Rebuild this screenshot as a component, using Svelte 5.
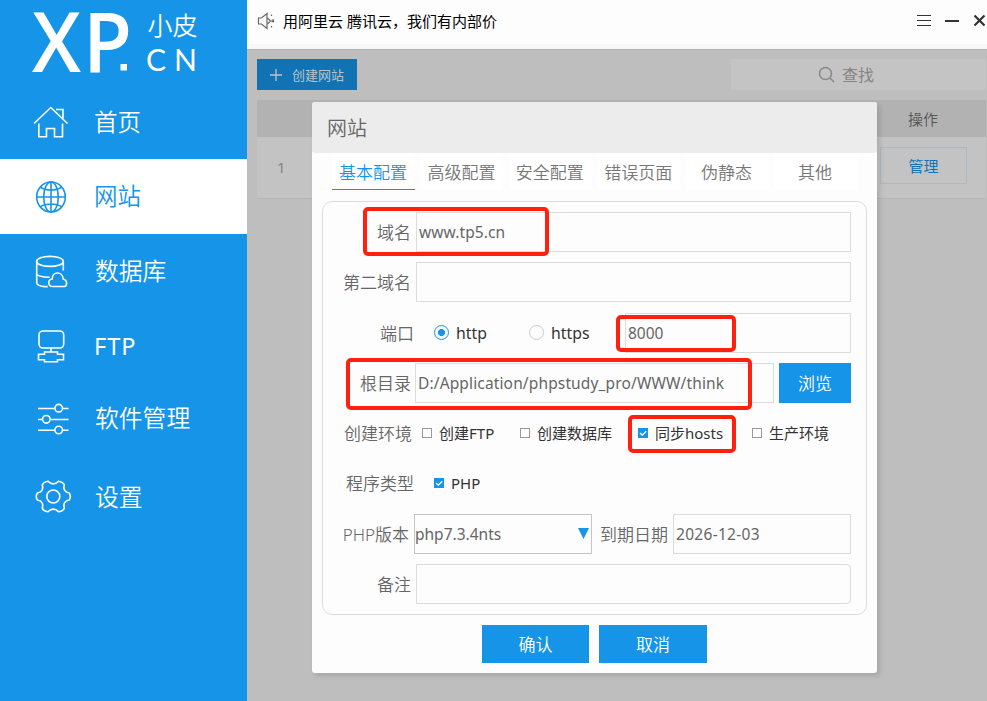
<script>
  let active = 'site';
  let tab = 0;
  let scheme = 'http';

  const menu = [
    { id: 'home', label: '首页' },
    { id: 'site', label: '网站' },
    { id: 'db', label: '数据库' },
    { id: 'ftp', label: 'FTP' },
    { id: 'soft', label: '软件管理' },
    { id: 'setting', label: '设置' }
  ];

  const tabs = ['基本配置', '高级配置', '安全配置', '错误页面', '伪静态', '其他'];

  const envs = [
    { id: 'e-ftp', label: '创建FTP', on: false },
    { id: 'e-db', label: '创建数据库', on: false },
    { id: 'e-hosts', label: '同步hosts', on: true },
    { id: 'e-prod', label: '生产环境', on: false }
  ];
</script>

{#snippet check(on)}
  <svg class="check" viewBox="0 0 10 10">
    {#if on}
      <rect width="10" height="10" fill="#1694e8" />
      <path d="M2 5l2.3 2.2L8.3 3.2" fill="none" stroke="#fff" stroke-width="1.3" />
    {:else}
      <rect x=".5" y=".5" width="9" height="9" fill="#fff" stroke="#999" />
    {/if}
  </svg>
{/snippet}

<div class="app">
  <aside>
    <svg class="logo" viewBox="0 0 247 84">
      <g fill="#fff">
        <text class="big" x="32" y="72" textLength="49" lengthAdjust="spacingAndGlyphs">X</text>
        <text class="big" x="83" y="72" textLength="49" lengthAdjust="spacingAndGlyphs">P</text>
        <rect x="120.5" y="64" width="6.5" height="6.5" />
        <text class="cn" x="147.5" y="35">小皮</text>
        <text class="en" x="146" y="71">C</text>
        <text class="en" x="174" y="71">N</text>
      </g>
    </svg>
    <nav>
      {#each menu as item}
        <button class="item {item.id}" class:active={active === item.id} on:click={() => (active = item.id)}>
          <svg class="icon" viewBox="0 0 40 40">
            {#if item.id === 'home'}
              <path d="M2 21.5L18.8 5.5L35.5 21.5M24 7.5h7v9M6.8 21.5v13.3h7.7v-8.3h8v8.3h8V21.5" />
            {:else if item.id === 'site'}
              <ellipse cx="19" cy="20" rx="14.3" ry="15" />
              <ellipse cx="19" cy="20" rx="7.3" ry="15" />
              <path d="M19 5v30M4.7 20h28.6M8 10c6 4 16 4 22 0M8 30c6-4 16-4 22 0" />
            {:else if item.id === 'db'}
              <ellipse cx="18" cy="9.4" rx="13.3" ry="5" />
              <path d="M4.7 9.4v21c0 2.3 3.5 4.2 8 4.2h3M31.3 9.4v9M4.7 22.2c1 1.7 6 3 13 3" />
              <path d="M21 34.5c-5.5 0-5.5-7-.8-7.5c0-8 10.5-8 11 0c4.5 1 4.5 7.5 0 7.5z" />
            {:else if item.id === 'ftp'}
              <rect x="7" y="4" width="24.7" height="17" rx="4" />
              <path d="M19 21v4M12.5 25h13v2.3h6v5.5h-6v2h-13v-2h-6v-5.5h6z" />
            {:else if item.id === 'soft'}
              <path d="M6 10.5h16.5M30.5 10.5h6M6 21.5h4M18 21.5h18.5M6 32.3h16.5M30.5 32.3h6" />
              <circle cx="26.7" cy="10.2" r="3.8" />
              <circle cx="14.3" cy="21.3" r="3.8" />
              <circle cx="26.7" cy="32" r="3.8" />
            {:else}
              <circle cx="21.3" cy="20.5" r="6.5" />
              <path d="M16 5.2C19.5 8.8 23.1 8.8 26.6 5.2C29.5 5.8 32 7.5 32.3 9C31 13.5 33 16.2 37.2 17C38.5 19 38.5 22 37.2 24C33 24.8 31 27.5 32.3 32C32 33.5 29.5 35.2 26.6 35.8C23.1 32.2 19.5 32.2 16 35.8C13.1 35.2 10.6 33.5 10.3 32C11.6 27.5 9.6 24.8 5.4 24C4.1 22 4.1 19 5.4 17C9.6 16.2 11.6 13.5 10.3 9C10.6 7.5 13.1 5.8 16 5.2Z" />
            {/if}
          </svg>
          <span>{item.label}</span>
        </button>
      {/each}
    </nav>
  </aside>

  <main>
    <header>
      <svg class="horn" viewBox="0 0 18 18">
        <path d="M1.5 6h3l5.5-4.5v15l-5.5-4.5h-3z" fill="none" stroke="#666" stroke-width="1.2" />
        <path d="M10.5 6l3 3l-3 3M14.5 2.5v1.5M14.5 8.2h2v1.5h-2M14.5 14v1.5" fill="none" stroke="#666" stroke-width="1.2" />
      </svg>
      <span class="notice">用阿里云 腾讯云，我们有内部价</span>
      <svg class="win" viewBox="0 0 70 20">
        <g fill="none" stroke="#333">
          <path d="M0 5.5h14M0 10.5h14M0 15.5h14" />
          <path d="M28 11h14" stroke-width="2" />
          <path d="M57.5 5.5l10 10M67.5 5.5l-10 10" stroke-width="2.2" />
        </g>
      </svg>
    </header>

    <div class="tools">
      <button class="create">
        <svg viewBox="0 0 12 12"><path d="M6 0v12M0 6h12" stroke="#c4c4c4" stroke-width="1.3" /></svg>
        <span>创建网站</span>
      </button>
      <div class="search">
        <svg viewBox="0 0 18 18"><path d="M12 12l4 4M13.5 7.5a6 6 0 1 1-12 0a6 6 0 1 1 12 0z" fill="none" stroke="#898989" stroke-width="1.6" /></svg>
        <span>查找</span>
      </div>
    </div>
    <div class="table">
      <div class="thead"><span>操作</span></div>
      <div class="trow">
        <span class="idx">1</span>
        <button class="manage">管理</button>
      </div>
    </div>
  </main>

  <section class="dialog">
    <h2>网站</h2>
    <div class="tabs">
      {#each tabs as name, i}
        <button class:on={tab === i} on:click={() => (tab = i)}>{name}</button>
      {/each}
    </div>

    <div class="form">
      <div class="row">
        <label for="domain">域名</label>
        <div class="field" id="domain"><span class="t-domain">www.tp5.cn</span></div>
      </div>
      <div class="row">
        <label for="domain2">第二域名</label>
        <div class="field" id="domain2"></div>
      </div>
      <div class="row port">
        <label for="port">端口</label>
        <div class="radios">
          {#each ['http', 'https'] as s}
            <button class="radio" on:click={() => (scheme = s)}>
              <i class:on={scheme === s}></i>{s}
            </button>
          {/each}
        </div>
        <div class="field" id="port">8000</div>
      </div>
      <div class="row root">
        <label for="root">根目录</label>
        <div class="field" id="root"><span class="t-root">D:/Application/phpstudy_pro/WWW/think</span></div>
        <button class="btn browse">浏览</button>
      </div>
      <div class="row env">
        <label for="e-ftp">创建环境</label>
        {#each envs as env}
          <div class="opt {env.id}" id={env.id}>{@render check(env.on)}<span>{env.label}</span></div>
        {/each}
      </div>
      <div class="row type">
        <label for="php">程序类型</label>
        <div class="opt" id="php">{@render check(true)}<span>PHP</span></div>
      </div>
      <div class="row version">
        <label for="ver">PHP版本</label>
        <div class="field select" id="ver">
          <span>php7.3.4nts</span>
          <svg viewBox="0 0 11 11"><path d="M0 0h11L5.5 11z" fill="#1694e8" /></svg>
        </div>
        <label class="due" for="due">到期日期</label>
        <div class="field" id="due"><span class="t-due">2026-12-03</span></div>
      </div>
      <div class="row">
        <label for="note">备注</label>
        <div class="field note" id="note"></div>
      </div>
    </div>

    <div class="actions">
      <button class="btn">确认</button>
      <button class="btn cancel">取消</button>
    </div>
  </section>

  <div class="mark m-domain"></div>
  <div class="mark m-port"></div>
  <div class="mark m-root"></div>
  <div class="mark m-hosts"></div>
</div>

<style>
  :global(body) {
    margin: 0;
    overflow: hidden;
  }

  .app {
    position: relative;
    display: flex;
    width: 987px;
    height: 701px;
    overflow: hidden;
    font-family: 'Noto Sans', 'Noto Sans CJK SC', sans-serif;
    font-size: 15px;
    color: #666;
  }

  .app * {
    box-sizing: border-box;
  }

  button {
    margin: 0;
    padding: 0;
    border: 0;
    background: none;
    font: inherit;
    color: inherit;
    white-space: nowrap;
  }

  svg {
    display: block;
    flex: none;
  }

  aside {
    width: 247px;
    flex: none;
    background: #1694e8;
  }

  .logo {
    width: 247px;
    height: 84px;
    overflow: visible;
  }

  .big {
    font: 600 84px 'Open Sans', sans-serif;
  }

  .cn {
    font: 350 25px 'Noto Sans CJK SC', sans-serif;
  }

  .en {
    font: 400 30px Lato, sans-serif;
  }

  nav {
    display: flex;
    flex-direction: column;
  }

  .item {
    display: flex;
    align-items: center;
    height: 75px;
    padding-left: 32px;
    color: #fff;
    font-size: 23.5px;
    font-weight: 350;
    line-height: 34px;
  }

  .item span {
    margin-left: 22px;
  }

  .item.site span,
  .item.ftp span {
    padding-bottom: 2px;
  }

  .item.db span,
  .item.soft span,
  .item.setting span {
    margin-left: 23px;
    padding-bottom: 1px;
    font-size: 23.8px;
  }

  .item.ftp span {
    letter-spacing: 1px;
    font-weight: 400;
  }

  .item.soft {
    height: 72px;
    padding-bottom: 4px;
  }

  .item.setting {
    height: 80px;
  }

  .item.setting span {
    padding: 1px 0 0;
  }

  .item.active {
    background: #fff;
    color: #1694e8;
  }

  .icon {
    width: 40px;
    height: 40px;
    fill: none;
    stroke: currentColor;
    stroke-width: 1.6;
  }

  main {
    flex: 1;
    min-width: 0;
    background: #bebebe;
  }

  header {
    display: flex;
    align-items: center;
    height: 50px;
    padding: 0 0 7px 10px;
    background: linear-gradient(#fdfdfd 44px, #f8f8f8 44px);
    border-bottom: 1px solid #b0b0b0;
  }

  .horn {
    width: 18px;
    height: 18px;
  }

  .notice {
    margin-left: 8px;
    padding-bottom: 1px;
    color: #000;
    white-space: nowrap;
  }

  .win {
    width: 70px;
    height: 20px;
    margin: 0 0 2px auto;
  }

  .tools {
    display: flex;
    justify-content: space-between;
    padding: 9px 1px 10px 10px;
  }

  .create {
    display: flex;
    align-items: center;
    width: 100px;
    height: 31px;
    padding-left: 13px;
    background: #1173b4;
    color: #b9c3ca;
    font-size: 13px;
  }

  .create svg {
    width: 12px;
    height: 12px;
    margin-right: 10px;
  }

  .search {
    display: flex;
    align-items: center;
    width: 255px;
    height: 31px;
    padding-left: 87px;
    background: #c4c4c4;
    color: #858585;
    font-size: 16px;
  }

  .search span {
    padding-bottom: 2px;
  }

  .search svg {
    width: 18px;
    height: 18px;
    margin-right: 6px;
  }

  .table {
    margin: 0 1px 0 10px;
  }

  .thead {
    display: flex;
    align-items: center;
    justify-content: flex-end;
    height: 37px;
    padding-right: 48px;
    background: #b2b2b2;
    color: #555;
    font-weight: 350;
  }

  .trow {
    display: flex;
    align-items: center;
    justify-content: space-between;
    height: 62px;
    padding: 0 19px 0 20px;
    background: #c3c3c3;
    border-bottom: 1px solid #b5b5b5;
    color: #858585;
  }

  .idx {
    padding-bottom: 1px;
  }

  .manage {
    width: 87px;
    height: 37px;
    margin-bottom: 5px;
    border: 1px solid #aab9c4;
    color: #1173b4;
  }

  .dialog {
    position: absolute;
    left: 312px;
    top: 102px;
    width: 565px;
    height: 571px;
    background: #fdfdfd;
    border-radius: 3px;
    box-shadow: 3px 3px 5px rgba(0, 0, 0, 0.12);
  }

  h2 {
    height: 51px;
    margin: 0;
    padding-left: 15px;
    background: #ececec;
    border-radius: 3px;
    font-size: 20px;
    font-weight: 350;
    line-height: 53px;
  }

  .tabs {
    display: flex;
    gap: 5.4px;
    padding-left: 20px;
  }

  .tabs button {
    width: 83px;
    height: 37px;
    padding-right: 1px;
    background: #fff;
    border-bottom: 1px solid transparent;
    font-size: 17px;
    font-weight: 350;
    color: #777;
  }

  .tabs .on {
    color: #1694e8;
    border-color: #1694e8;
  }

  .form {
    display: flex;
    flex-direction: column;
    justify-content: space-between;
    width: 545px;
    height: 414px;
    margin: 11px 10px 0;
    padding: 10px 15px;
    border: 1px solid #dcdcdc;
    border-radius: 10px;
  }

  .row {
    display: flex;
    align-items: center;
    height: 40px;
  }

  label {
    width: 73px;
    flex: none;
    margin-right: 5px;
    padding-bottom: 1px;
    font-size: 17px;
    font-weight: 350;
    text-align: right;
    white-space: nowrap;
  }

  .field {
    display: flex;
    align-items: center;
    flex: 1;
    height: 40px;
    padding-left: 2px;
    border: 1px solid #dcdcdc;
    font-size: 15.5px;
    white-space: nowrap;
  }

  .t-domain {
    letter-spacing: 0.1px;
  }

  .t-root {
    letter-spacing: 0.14px;
  }

  .t-due {
    letter-spacing: 0.3px;
  }

  .note {
    border-radius: 0 4px 4px 0;
  }

  .port label {
    width: 76px;
    margin-right: 20px;
  }

  .radios {
    display: flex;
    flex: 1;
  }

  .radio {
    display: flex;
    align-items: center;
    width: 95px;
    font-size: 15.8px;
    color: #333;
  }

  .radio i {
    width: 15px;
    height: 15px;
    margin-right: 7px;
    border: 1px solid #ccc;
    border-radius: 50%;
  }

  .radio i.on {
    border-color: #1694e8;
    background: radial-gradient(circle, #1694e8 3.2px, transparent 3.8px);
  }

  .port .field {
    flex: none;
    width: 226px;
  }

  .root label {
    margin-right: 4px;
  }

  .btn {
    width: 107px;
    height: 38px;
    padding-bottom: 1px;
    background: #1694e8;
    color: #fff;
    font-size: 17px;
    font-weight: 350;
  }

  .cancel {
    width: 108px;
  }

  .browse {
    width: 72px;
    height: 40px;
    margin-left: 5px;
  }

  .env label {
    width: 74px;
    margin-right: 10px;
  }

  .opt {
    display: flex;
    align-items: center;
    width: 98px;
    color: #333;
    white-space: nowrap;
  }

  .env .opt span {
    padding-bottom: 2px;
  }

  .check {
    width: 10px;
    height: 10px;
    margin-right: 7px;
  }

  .opt.e-db {
    width: 118px;
  }

  .opt.e-hosts {
    width: 114px;
  }

  .type label {
    width: 76px;
    margin-right: 20px;
  }

  .version label {
    width: 71px;
  }

  .select {
    justify-content: space-between;
    padding: 0 2px 0 0;
    border-color: #c4c4c4;
  }

  .select svg {
    width: 11px;
    height: 11px;
  }

  .version .due {
    width: 68px;
    margin-left: 8px;
  }

  .version .field {
    flex: none;
    width: 178px;
  }

  .actions {
    display: flex;
    gap: 10px;
    padding: 10px 0 0 170px;
  }

  /* highlighted settings */
  .mark {
    position: absolute;
    border: 4px solid #ff2010;
    border-radius: 5px;
    pointer-events: none;
  }

  .m-domain {
    left: 363px;
    top: 207px;
    width: 186px;
    height: 49px;
  }

  .m-port {
    left: 616px;
    top: 315px;
    width: 120px;
    height: 37px;
  }

  .m-root {
    left: 346px;
    top: 358px;
    width: 406px;
    height: 52px;
  }

  .m-hosts {
    left: 628px;
    top: 415px;
    width: 108px;
    height: 38px;
  }
</style>
